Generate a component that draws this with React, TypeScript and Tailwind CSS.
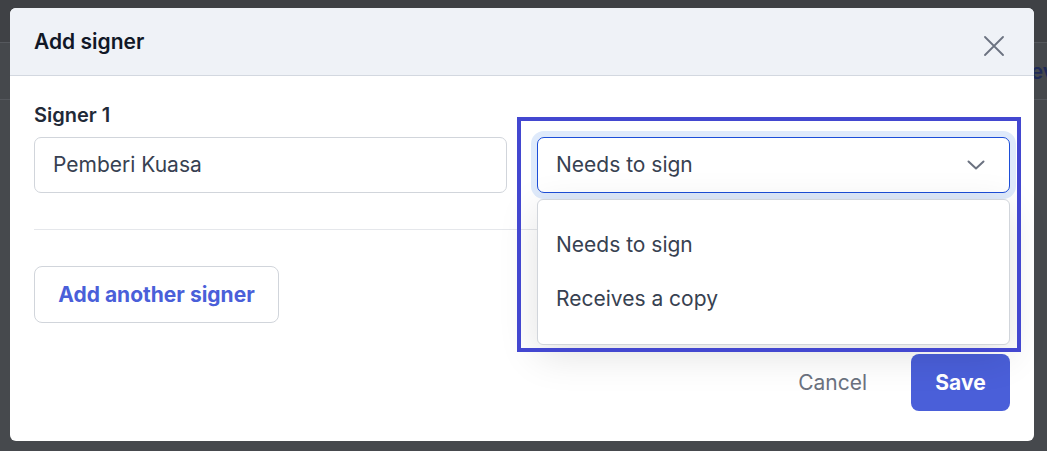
import { useState } from 'react'

const OPTIONS = ['Needs to sign', 'Receives a copy']

function CloseIcon() {
  return (
    <svg className="h-5 w-5 text-[#6b7280]" viewBox="0 0 20 20" fill="none" stroke="currentColor" strokeWidth={1.8} strokeLinecap="round">
      <path d="M1 1L19 19M19 1L1 19" />
    </svg>
  )
}

function ChevronDown() {
  return (
    <svg className="h-[10px] w-[18px] text-[#6b7280]" viewBox="0 0 18 10" fill="none" stroke="currentColor" strokeWidth={2} strokeLinecap="round" strokeLinejoin="round">
      <path d="M1.5 1.5L9 8.5L16.5 1.5" />
    </svg>
  )
}

export default function App() {
  const [role] = useState(OPTIONS[0])

  return (
    <div
      className="relative h-[451px] w-[1047px] overflow-hidden bg-[#46494d]"
      style={{ fontFamily: 'Inter, "Noto Sans", sans-serif' }}
    >
      {/* Page behind the overlay */}
      <div className="flex flex-col">
        <div className="h-[43px] border-b border-[#55585d] bg-[#3f4145]" />
        <div className="flex h-[57px] items-center justify-end border-b border-[#55585d] bg-[#45484c]">
          <span className="mr-[-8px] mt-[2px] text-[21px] font-semibold text-[#1f2a57]">ev</span>
        </div>
      </div>

      {/* Modal */}
      <div className="absolute left-[10px] top-[8px] flex h-[433px] w-[1024px] flex-col rounded-[6px] bg-white">
        <div className="flex h-[68px] items-center justify-between rounded-t-[6px] border-b border-[#d3d8e0] bg-[#eff2f7] pl-6 pr-[30px]">
          <h2 className="text-[21px] font-semibold text-[#111827]">Add signer</h2>
          <button className="mt-[8px]">
            <CloseIcon />
          </button>
        </div>

        <div className="flex flex-1 flex-col px-6 pt-[25px]">
          <label className="text-[20px] font-semibold leading-[29px] text-[#1f2937]">Signer 1</label>
          <div className="mt-[7px] grid grid-cols-2 gap-[30px]">
            <div className="flex h-[56px] items-center rounded-[7px] border border-[#d1d5db] px-[18px] text-[21px] text-[#374151]">
              Pemberi Kuasa
            </div>
            <div className="relative">
              <div className="flex h-[56px] items-center justify-between rounded-[7px] border border-[#1d4ed8] bg-white pl-[18px] pr-[24px] text-[21px] text-[#374151] ring-[6px] ring-[#dfeafb]">
                {role}
                <ChevronDown />
              </div>
              <div className="absolute left-0 right-0 top-[62px] z-10 rounded-[6px] border border-[#d1d5db] bg-white py-[18px] shadow-[0_10px_40px_rgba(0,0,0,0.12)]">
                {OPTIONS.map((option) => (
                  <div key={option} className="flex h-[54px] items-center px-[18px] text-[21px] text-[#374151]">
                    {option}
                  </div>
                ))}
              </div>
            </div>
          </div>

          <div className="mt-[36px] border-t border-[#e5e7eb]" />

          <div className="mt-[36px]">
            <button className="h-[57px] w-[245px] rounded-[8px] border border-[#d1d5db] text-[21px] font-bold text-[#4a5fd9]">
              Add another signer
            </button>
          </div>

          <div className="mt-auto flex items-center justify-end gap-[12px] pb-[30px]">
            <button className="px-[32px] text-[21px] text-[#6b7280]">Cancel</button>
            <button className="h-[57px] w-[99px] rounded-[8px] bg-[#4a5fd9] text-[21px] font-bold text-white">Save</button>
          </div>
        </div>
      </div>

      {/* Highlight annotation */}
      <div className="pointer-events-none absolute left-[517px] top-[117px] z-20 h-[235px] w-[504px] border-4 border-[#4347d0]" />
    </div>
  )
}
